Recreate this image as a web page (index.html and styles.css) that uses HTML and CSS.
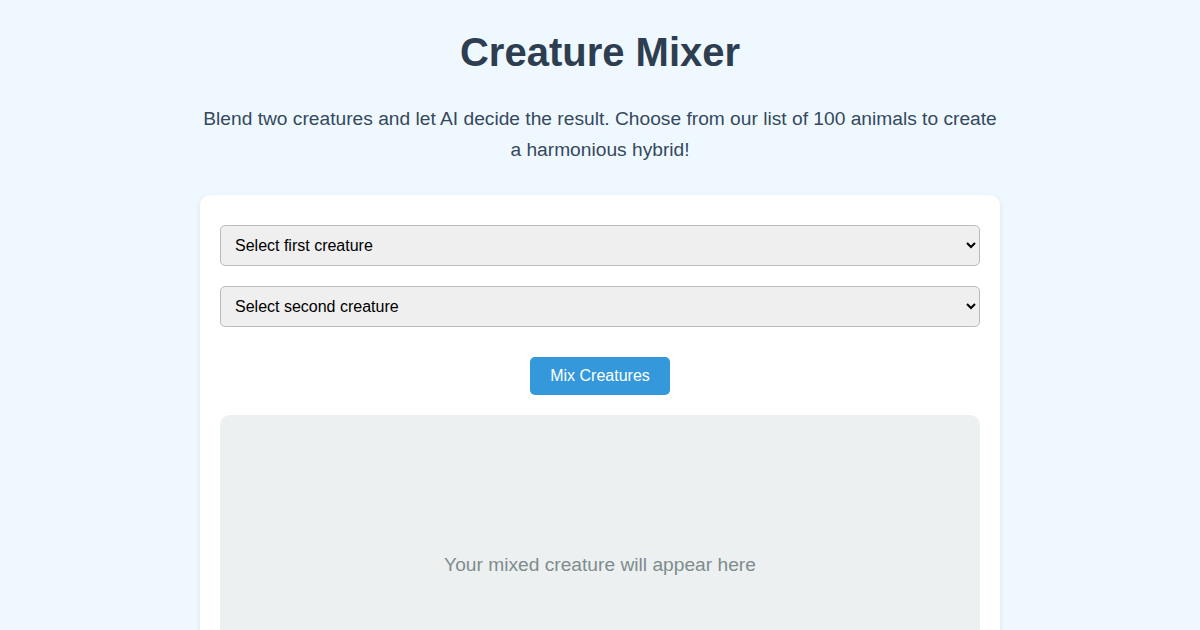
FILE: index.html
```html
<!DOCTYPE html>
<html lang="en">
<head>
<meta charset="utf-8">
<title>Creature Mixer</title>
<link rel="stylesheet" href="styles.css">
</head>
<body>
<div class="container">
  <h1 class="title">Creature Mixer</h1>
  <p class="intro">Blend two creatures and let AI decide the result. Choose from our list of 100 animals to create a harmonious hybrid!</p>
  <div class="card">
    <select class="picker">
      <option>Select first creature</option>
    </select>
    <select class="picker">
      <option>Select second creature</option>
    </select>
    <div class="actions">
      <button class="mix-btn">Mix Creatures</button>
    </div>
    <div class="result">
      <span class="placeholder">Your mixed creature will appear here</span>
    </div>
  </div>
</div>
</body>
</html>
```

FILE: styles.css
```css
html, body {
  margin: 0;
  padding: 0;
}
body {
  background: #f0f8ff;
  font-family: "Liberation Sans", Arial, sans-serif;
  color: #2c3e50;
}
.container {
  max-width: 800px;
  margin: 0 auto;
  padding-top: 29px;
}
.title {
  margin: 0;
  font-size: 40px;
  line-height: 46px;
  text-align: center;
  color: #2c3e50;
  font-weight: bold;
}
.intro {
  margin: 28px 0 30px;
  font-size: 19.2px;
  line-height: 31px;
  text-align: center;
  color: #34495e;
}
.card {
  background: #fff;
  border-radius: 10px;
  padding: 30px 20px 20px;
  box-shadow: 0 2px 6px rgba(0, 0, 0, 0.08);
}
.picker {
  display: block;
  width: 100%;
  height: 41px;
  padding: 10px;
  margin: 0 0 20px;
  font-family: "Liberation Sans", Arial, sans-serif;
  font-size: 16px;
  color: #000;
  background-color: #efefef;
  border: 1px solid #bbb;
  border-radius: 5px;
  box-sizing: border-box;
}
.actions {
  display: flex;
  justify-content: center;
  padding-top: 10px;
}
.mix-btn {
  width: 140px;
  height: 38px;
  padding: 0;
  border: none;
  border-radius: 5px;
  background: #3498db;
  color: #fff;
  font-family: "Liberation Sans", Arial, sans-serif;
  font-size: 16px;
  cursor: pointer;
}
.result {
  margin-top: 20px;
  min-height: 300px;
  background: #ecf0f1;
  border-radius: 10px;
  display: flex;
  align-items: center;
  justify-content: center;
}
.placeholder {
  color: #7f8c8d;
  font-size: 19.2px;
}
```
